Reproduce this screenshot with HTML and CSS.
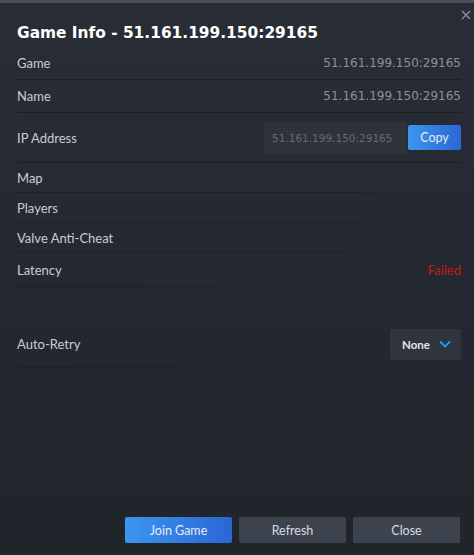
FILE: index.html
```html
<!DOCTYPE html>
<html>
<head>
<meta charset="utf-8">
<link rel="stylesheet" href="styles.css">
</head>
<body>
<div class="dialog">
  <div class="topbar"></div>
  <button class="close-x" aria-label="Close">
    <svg width="10" height="10" viewBox="0 0 10 10"><path d="M1 1L9 9M9 1L1 9" stroke="#8b929a" stroke-width="1.4" fill="none"/></svg>
  </button>
  <div class="content">
    <h1 class="title">Game Info - 51.161.199.150:29165</h1>
    <div class="rows">
      <div class="row row-val"><span class="label">Game</span><span class="value">51.161.199.150:29165</span></div>
      <div class="row row-val"><span class="label">Name</span><span class="value">51.161.199.150:29165</span></div>
      <div class="row row-ip">
        <span class="label">IP Address</span>
        <div class="ip-group">
          <div class="ip-input">51.161.199.150:29165</div>
          <button class="btn-blue btn-copy">Copy</button>
        </div>
      </div>
      <div class="row row-plain fade"><span class="label">Map</span></div>
      <div class="row row-plain fade"><span class="label">Players</span></div>
      <div class="row row-plain fade"><span class="label">Valve Anti-Cheat</span></div>
      <div class="row row-lat fade2"><span class="label">Latency</span><span class="failed">Failed</span></div>
    </div>
    <div class="row row-retry fade2">
      <span class="label">Auto-Retry</span>
      <div class="dropdown">
        <span>None</span>
        <svg width="12" height="8" viewBox="0 0 12 8"><path d="M1 1.5L6 6.5L11 1.5" stroke="#1a9fff" stroke-width="1.8" fill="none"/></svg>
      </div>
    </div>
  </div>
  <div class="footer">
    <button class="btn btn-blue">Join Game</button>
    <button class="btn btn-gray">Refresh</button>
    <button class="btn btn-gray">Close</button>
  </div>
</div>
</body>
</html>
```

FILE: styles.css
```css
* { box-sizing: border-box; }
html, body { margin: 0; padding: 0; height: 100%; }
body {
  font-family: Lato, "Noto Sans", sans-serif;
  background: linear-gradient(180deg, #292d36 0%, #23272f 60%, #20242b 100%);
  color: #c8ccd2;
}
.dialog {
  position: relative;
  height: 555px;
  display: flex;
  flex-direction: column;
}
.topbar { height: 3px; background: #4a4e58; flex: none; }
.close-x {
  position: absolute;
  top: 10px;
  right: 3px;
  background: none;
  border: 0;
  padding: 0;
  width: 10px;
  height: 10px;
  display: flex;
}
.content { padding: 0 13px 0 17px; flex: 1; }
.title {
  margin: 20px 0 0;
  font-family: "DejaVu Sans", sans-serif;
  font-size: 15.4px;
  font-weight: bold;
  color: #ffffff;
  line-height: 20px;
  height: 23px;
}
.rows { display: flex; flex-direction: column; }
.row {
  display: flex;
  align-items: center;
  justify-content: space-between;
  border-bottom: 1px solid #1c1f25;
}
.row-val { height: 34px; }
.row-val + .row-val { height: 33px; }
.row-ip { height: 50px; }
.row-plain { height: 30px; }
.row-lat { height: 34px; }
.fade { border-bottom: 0; background: linear-gradient(90deg, #1c1f25 0%, #1e2128 70%, transparent 100%) bottom / 100% 1px no-repeat; }
.fade2 { border-bottom: 0; background: linear-gradient(90deg, #1d2026 0%, #1f2229 45%, transparent 55%) bottom / 100% 1px no-repeat; }
.label { font-size: 13px; color: #c9cdd3; }
.value { font-family: "DejaVu Sans", sans-serif; font-size: 12px; color: #8b929a; }
.failed { font-size: 13px; color: #c21b1b; }
.ip-group { display: flex; align-items: center; }
.ip-input {
  width: 143px;
  height: 32px;
  background: #2e323b;
  color: #656b75;
  font-family: "DejaVu Sans", sans-serif;
  font-size: 10.5px;
  display: flex;
  align-items: center;
  padding-left: 8px;
}
.btn-blue {
  background: linear-gradient(90deg, #3c95ee 0%, #2a66d6 100%);
  color: #e6ecf5;
  border: 0;
  font-family: inherit;
}
.btn-copy {
  width: 53px;
  height: 25px;
  margin-left: 1px;
  font-size: 12.5px;
  border-radius: 2px;
}
.row-retry { height: 81px; padding-top: 33px; align-items: center; }
.dropdown {
  width: 71px;
  height: 31px;
  background: #30343d;
  display: flex;
  align-items: center;
  padding-left: 12px;
  gap: 9px;
  font-size: 11.5px;
  font-weight: bold;
  color: #e4e6e9;
  border-radius: 2px;
}
.footer {
  display: flex;
  justify-content: flex-end;
  gap: 7px;
  padding: 0 14px 12px 0;
  flex: none;
}
.btn {
  width: 107px;
  height: 26px;
  font-family: inherit;
  font-size: 12.5px;
  border: 0;
  border-radius: 2px;
}
.btn-gray { background: #3d434e; color: #d7dbe0; }
```
